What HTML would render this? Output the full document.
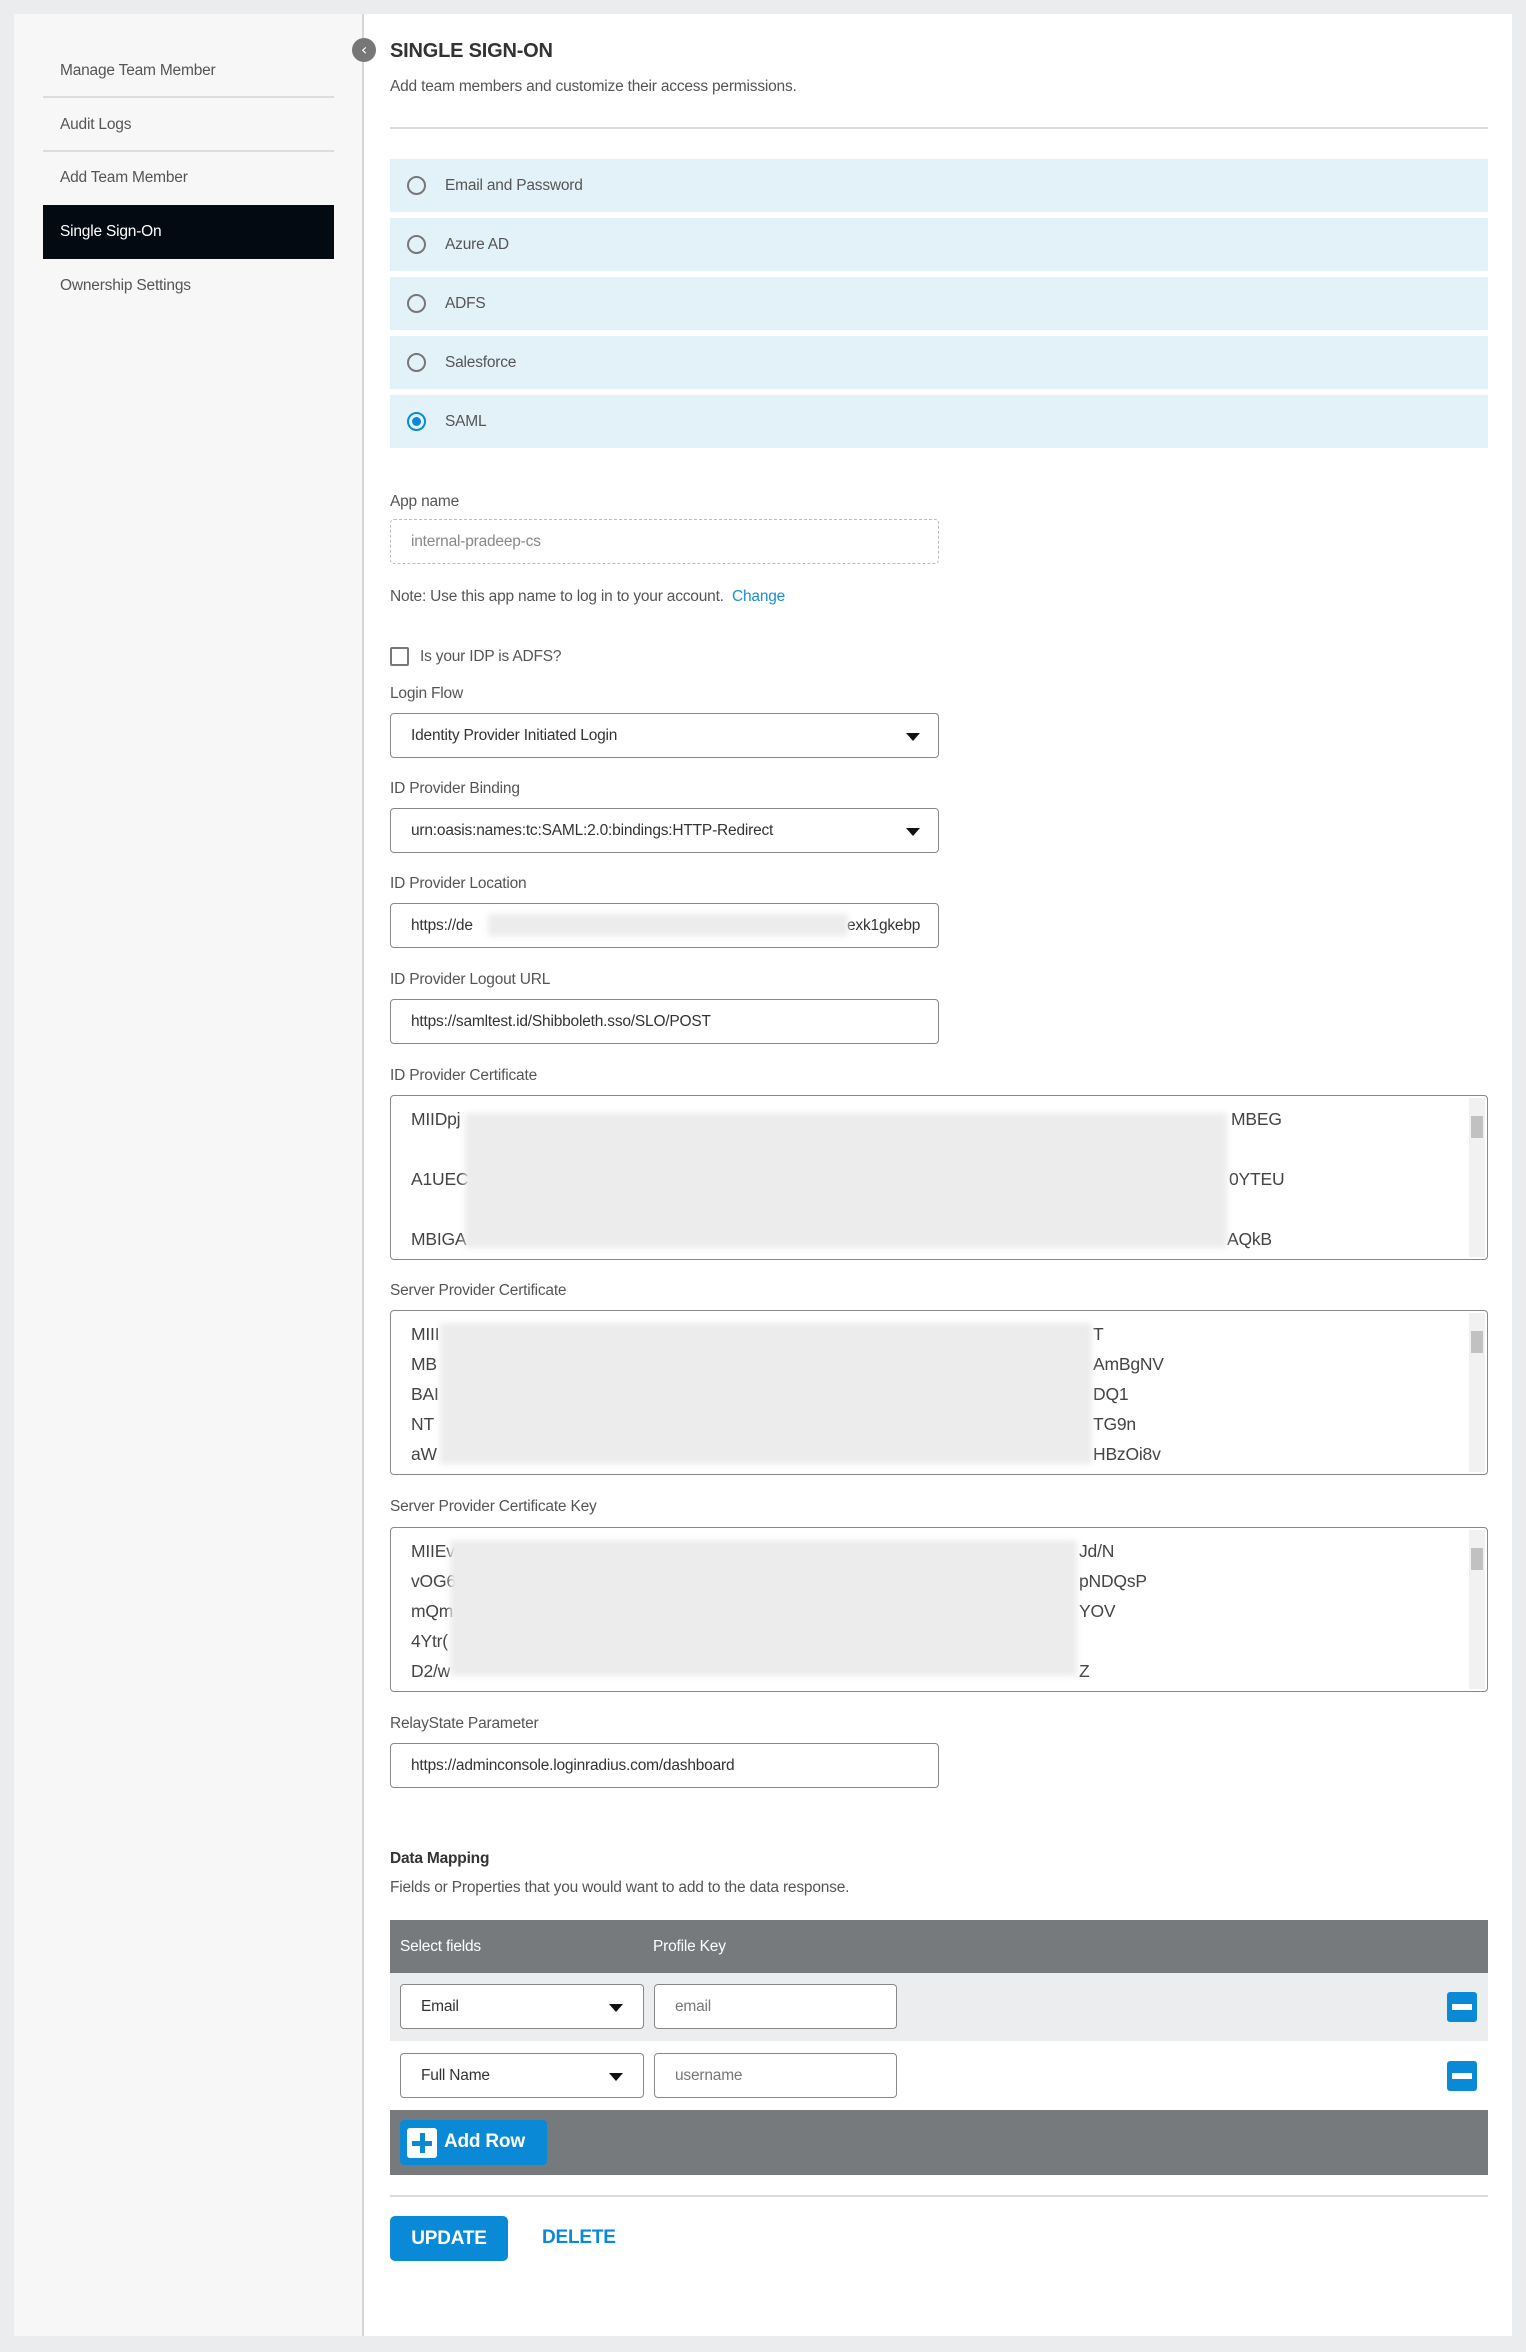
<!DOCTYPE html>
<html><head><meta charset="utf-8"><style>
*{box-sizing:border-box;margin:0;padding:0}
body{width:1526px;height:2352px;background:#ebecee;font-family:"Liberation Sans Narrow","Liberation Sans",sans-serif;color:#444;position:relative;overflow:hidden;letter-spacing:-0.2px}
.a{position:absolute}
.card{left:14px;top:14px;width:1498px;height:2322px;background:#fff}
.side{left:14px;top:14px;width:350px;height:2322px;background:#f7f7f7;border-right:2px solid #d6d6d6}
.nav{left:60px;font-size:15.5px;color:#555}
.sep{left:43px;width:291px;height:2px;background:#dcdcdc}
.lbl{left:390px;font-size:15.5px;color:#555}
.radio{left:390px;width:1098px;height:53px;background:#e3f1f9}
.radio .c{position:absolute;left:17px;top:17px;width:19px;height:19px;border:2px solid #777;border-radius:50%}
.radio span{position:absolute;left:55px;top:18px;font-size:15.5px;color:#555}
.inp{left:390px;width:549px;height:45px;border:1.5px solid #888;border-radius:4px;background:#fff;font-size:15.5px;color:#333;padding:13px 20px;white-space:nowrap;overflow:hidden}
.arrow{position:absolute;right:18px;top:19px;width:0;height:0;border-left:7px solid transparent;border-right:7px solid transparent;border-top:8px solid #111}
.ta{left:390px;width:1098px;height:165px;border:1.5px solid #888;border-radius:4px;background:#fff;overflow:hidden;font-size:17.5px;color:#444}
.ta .sb{position:absolute;right:2px;top:2px;width:16px;bottom:2px;background:#f1f1f1}
.ta .th{position:absolute;right:4px;top:20px;width:12px;height:22px;background:#c1c1c1}
.blur{background:#ececec;filter:blur(3px)}
.ln{position:absolute;left:20px}
</style></head><body>
<div class="a card"></div>
<div class="a side"></div>
<div class="a nav" style="top:62px">Manage Team Member</div>
<div class="a sep" style="top:96px"></div>
<div class="a nav" style="top:116px">Audit Logs</div>
<div class="a sep" style="top:150px"></div>
<div class="a nav" style="top:169px">Add Team Member</div>
<div class="a" style="left:43px;top:205px;width:291px;height:54px;background:#040a12"></div>
<div class="a nav" style="top:223px;color:#fff">Single Sign-On</div>
<div class="a nav" style="top:277px">Ownership Settings</div>
<div class="a" style="left:352px;top:38px;width:24px;height:24px;border-radius:50%;background:#777;color:#fff;font-size:16px;text-align:center;line-height:23px;font-family:'DejaVu Sans',sans-serif">‹</div>

<div class="a" style="left:390px;top:40px;font-size:20px;font-weight:bold;color:#333">SINGLE SIGN-ON</div>
<div class="a lbl" style="top:78px">Add team members and customize their access permissions.</div>
<div class="a" style="left:390px;top:127px;width:1098px;height:2px;background:#dcdcdc"></div>

<div class="a radio" style="top:159px"><div class="c"></div><span>Email and Password</span></div>
<div class="a radio" style="top:218px"><div class="c"></div><span>Azure AD</span></div>
<div class="a radio" style="top:277px"><div class="c"></div><span>ADFS</span></div>
<div class="a radio" style="top:336px"><div class="c"></div><span>Salesforce</span></div>
<div class="a radio" style="top:395px"><div class="c" style="border-color:#0a8ad6"><div style="position:absolute;left:3px;top:3px;width:9px;height:9px;border-radius:50%;background:#0a8ad6"></div></div><span>SAML</span></div>

<div class="a lbl" style="top:493px">App name</div>
<div class="a inp" style="top:519px;border:1.5px dashed #bbb;color:#888">internal-pradeep-cs</div>
<div class="a lbl" style="top:588px">Note: Use this app name to log in to your account. &nbsp;<span style="color:#1a8fd6">Change</span></div>
<div class="a" style="left:390px;top:647px;width:19px;height:19px;border:2px solid #777;border-radius:2px"></div>
<div class="a lbl" style="left:420px;top:648px">Is your IDP is ADFS?</div>
<div class="a lbl" style="top:685px">Login Flow</div>
<div class="a inp" style="top:713px">Identity Provider Initiated Login<div class="arrow"></div></div>
<div class="a lbl" style="top:780px">ID Provider Binding</div>
<div class="a inp" style="top:808px">urn:oasis:names:tc:SAML:2.0:bindings:HTTP-Redirect<div class="arrow"></div></div>
<div class="a lbl" style="top:875px">ID Provider Location</div>
<div class="a inp" style="top:903px">https://de<span style="position:absolute;left:456px;top:13px">exk1gkebp</span></div>
<div class="a blur" style="left:488px;top:914px;width:360px;height:22px"></div>
<div class="a lbl" style="top:971px">ID Provider Logout URL</div>
<div class="a inp" style="top:999px">https://samltest.id/Shibboleth.sso/SLO/POST</div>
<div class="a lbl" style="top:1067px">ID Provider Certificate</div>
<div class="a ta" style="top:1095px"><div class="sb"></div><div class="th"></div>
<div class="ln" style="top:13px">MIIDpj<span style="position:absolute;left:820px">MBEG</span></div>
<div class="ln" style="top:73px">A1UEC<span style="position:absolute;left:818px">0YTEU</span></div>
<div class="ln" style="top:133px">MBIGA<span style="position:absolute;left:816px">AQkB</span></div></div>
<div class="a blur" style="left:465px;top:1113px;width:762px;height:135px"></div>
<div class="a lbl" style="top:1282px">Server Provider Certificate</div>
<div class="a ta" style="top:1310px"><div class="sb"></div><div class="th"></div>
<div class="ln" style="top:13px">MIII<span style="position:absolute;left:682px">T</span></div>
<div class="ln" style="top:43px">MB<span style="position:absolute;left:682px">AmBgNV</span></div>
<div class="ln" style="top:73px">BAI<span style="position:absolute;left:682px">DQ1</span></div>
<div class="ln" style="top:103px">NT<span style="position:absolute;left:682px">TG9n</span></div>
<div class="ln" style="top:133px">aW<span style="position:absolute;left:682px">HBzOi8v</span></div></div>
<div class="a blur" style="left:440px;top:1323px;width:652px;height:141px"></div>
<div class="a lbl" style="top:1498px">Server Provider Certificate Key</div>
<div class="a ta" style="top:1527px"><div class="sb"></div><div class="th"></div>
<div class="ln" style="top:13px">MIIEv<span style="position:absolute;left:668px">Jd/N</span></div>
<div class="ln" style="top:43px">vOG6<span style="position:absolute;left:668px">pNDQsP</span></div>
<div class="ln" style="top:73px">mQm<span style="position:absolute;left:668px">YOV</span></div>
<div class="ln" style="top:103px">4Ytr(</div>
<div class="ln" style="top:133px">D2/w<span style="position:absolute;left:668px">Z</span></div></div>
<div class="a blur" style="left:450px;top:1540px;width:627px;height:136px"></div>
<div class="a lbl" style="top:1715px">RelayState Parameter</div>
<div class="a inp" style="top:1743px">https://adminconsole.loginradius.com/dashboard</div>

<div class="a lbl" style="top:1850px;font-weight:bold;color:#333">Data Mapping</div>
<div class="a lbl" style="top:1879px">Fields or Properties that you would want to add to the data response.</div>
<div class="a" style="left:390px;top:1920px;width:1098px;height:53px;background:#767a7d"></div>
<div class="a" style="left:400px;top:1938px;font-size:15.5px;color:#fff">Select fields</div>
<div class="a" style="left:653px;top:1938px;font-size:15.5px;color:#fff">Profile Key</div>
<div class="a" style="left:390px;top:1973px;width:1098px;height:68px;background:#ecedef"></div>
<div class="a inp" style="left:400px;top:1984px;width:244px;padding-left:20px">Email<div class="arrow" style="right:20px"></div></div>
<div class="a inp" style="left:654px;top:1984px;width:243px;color:#777">email</div>
<div class="a" style="left:1447px;top:1992px;width:30px;height:30px;background:#0a8ad6;border-radius:3px"><div style="position:absolute;left:5px;top:12px;width:20px;height:6px;background:#fff"></div></div>
<div class="a inp" style="left:400px;top:2053px;width:244px;padding-left:20px">Full Name<div class="arrow" style="right:20px"></div></div>
<div class="a inp" style="left:654px;top:2053px;width:243px;color:#777">username</div>
<div class="a" style="left:1447px;top:2061px;width:30px;height:30px;background:#0a8ad6;border-radius:3px"><div style="position:absolute;left:5px;top:12px;width:20px;height:6px;background:#fff"></div></div>
<div class="a" style="left:390px;top:2110px;width:1098px;height:65px;background:#767a7d"></div>
<div class="a" style="left:400px;top:2120px;width:147px;height:45px;background:#0a8ad6;border-radius:4px"></div>
<div class="a" style="left:407px;top:2128px;width:30px;height:30px;background:#fff;border-radius:3px"><div style="position:absolute;left:13px;top:5px;width:5px;height:20px;background:#0a8ad6"></div><div style="position:absolute;left:5px;top:13px;width:20px;height:5px;background:#0a8ad6"></div></div>
<div class="a" style="left:444px;top:2131px;font-size:19px;font-weight:bold;color:#fff">Add Row</div>
<div class="a" style="left:390px;top:2195px;width:1098px;height:2px;background:#dcdcdc"></div>
<div class="a" style="left:390px;top:2216px;width:118px;height:45px;background:#0a8ad6;border-radius:5px;color:#fff;font-size:19px;font-weight:bold;text-align:center;line-height:45px">UPDATE</div>
<div class="a" style="left:542px;top:2227px;font-size:19px;font-weight:bold;color:#0a8ad6">DELETE</div>
</body></html>
